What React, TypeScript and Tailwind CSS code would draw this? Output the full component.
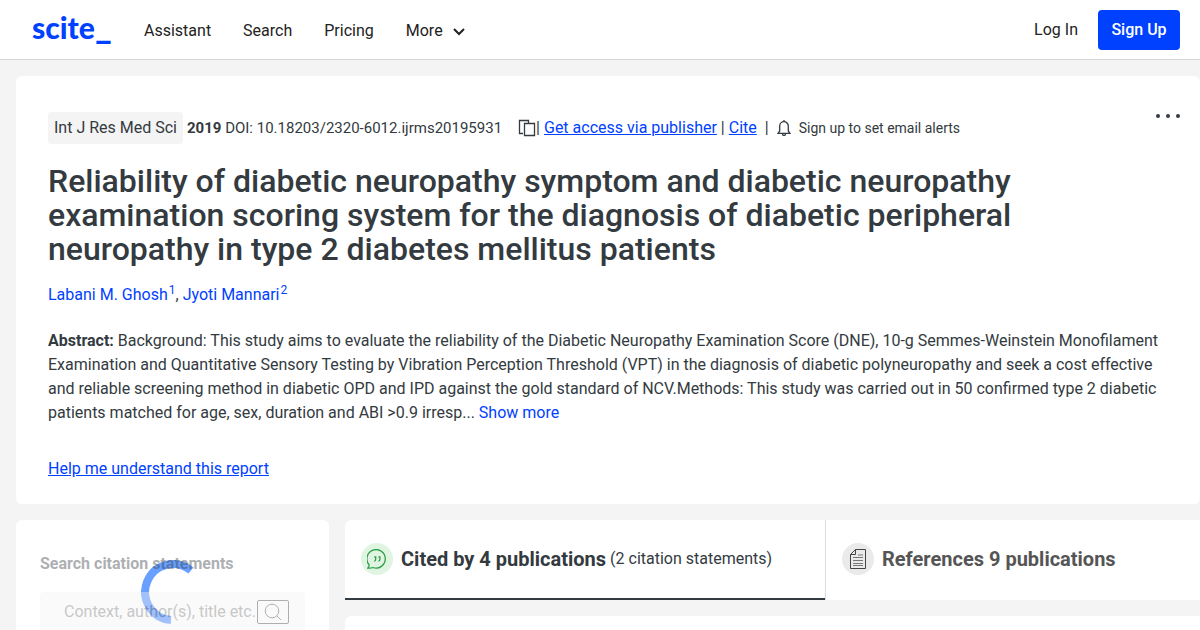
import type { ReactNode } from 'react';

interface NavLinkProps {
  children: ReactNode;
}

function NavLink({ children }: NavLinkProps) {
  return (
    <a href="#" className="text-[#222]">
      {children}
    </a>
  );
}

function Header() {
  return (
    <header className="flex h-[60px] shrink-0 items-center justify-between border-b border-[#d8d8d8] bg-white pl-8 pr-5">
      <div className="flex items-center">
        <a
          href="#"
          className="w-[112px] pb-2 font-['Lato',sans-serif] text-[30px] leading-8 font-black text-[#0041ff]"
        >
          scite<span className="text-4xl leading-8">_</span>
        </a>
        <nav className="flex items-center gap-8 pt-0.5">
          <NavLink>Assistant</NavLink>
          <NavLink>Search</NavLink>
          <NavLink>Pricing</NavLink>
          <button type="button" className="flex items-center gap-2 text-[#222]">
            More
            <svg className="mt-0.5 h-4 w-4" viewBox="0 0 16 16" fill="none" stroke="currentColor" strokeWidth="2">
              <path d="M3 5l5 5 5-5" />
            </svg>
          </button>
        </nav>
      </div>
      <div className="flex items-center gap-5">
        <NavLink>Log In</NavLink>
        <button type="button" className="h-10 w-[82px] rounded bg-[#0041ff] font-medium text-white">
          Sign Up
        </button>
      </div>
    </header>
  );
}

function ReportMeta() {
  return (
    <div className="flex h-8 items-center whitespace-nowrap">
      <span className="mr-1 rounded bg-[#f4f4f4] px-1.5 py-1">Int J Res Med Sci</span>
      <span className="mr-4 text-[15px]">
        <b>2019</b> DOI: 10.18203/2320-6012.ijrms20195931
      </span>
      <button type="button" aria-label="Copy DOI">
        <svg className="h-[18px] w-[18px]" viewBox="0 0 18 18" fill="none" stroke="currentColor" strokeWidth="1.3">
          <path d="M5 14.5H1.5v-13h9V4" />
          <path d="M6.5 4.5h10v12h-10z" />
        </svg>
      </button>
      <span className="mr-1">|</span>
      <a href="#" className="mr-1 text-[#0041ff] underline">
        Get access via publisher
      </a>
      <span className="mr-1">|</span>
      <a href="#" className="mr-2 text-[#0041ff] underline">
        Cite
      </a>
      <span className="mr-2">|</span>
      <button type="button" className="flex items-center gap-2 text-sm">
        <svg className="h-4 w-3.5" viewBox="0 0 14 16" fill="none" stroke="currentColor" strokeWidth="1.3">
          <path d="M7 0v1.5M1 13.4h12L11.3 11V6a4.3 4.3 0 0 0-8.6 0v5L1 13.4z" />
          <path d="M5.5 14a1.5 1.5 0 0 0 3 0" />
        </svg>
        Sign up to set email alerts
      </button>
    </div>
  );
}

function ReportCard() {
  return (
    <section className="h-[428px] shrink-0 rounded-md bg-white py-9 pl-8 pr-5">
      <div className="flex items-start justify-between">
        <ReportMeta />
        <button type="button" aria-label="More options" className="flex h-2 items-center gap-1.5">
          <span className="h-1 w-1 rounded-full bg-[#333a40]" />
          <span className="h-1 w-1 rounded-full bg-[#333a40]" />
          <span className="h-1 w-1 rounded-full bg-[#333a40]" />
        </button>
      </div>
      <h1 className="mt-5 text-[32px] leading-[34px] font-medium">
        Reliability of diabetic neuropathy symptom and diabetic neuropathy
        <br />
        examination scoring system for the diagnosis of diabetic peripheral
        <br />
        neuropathy in type 2 diabetes mellitus patients
      </h1>
      <p className="mt-[17px]">
        <a href="#" className="text-[#0041ff]">
          Labani M. Ghosh<sup className="ml-px text-xs">1</sup>
        </a>
        ,{' '}
        <a href="#" className="text-[#0041ff]">
          Jyoti Mannari<sup className="ml-px text-xs">2</sup>
        </a>
      </p>
      <p className="mt-[22px] whitespace-nowrap">
        <b>Abstract:</b> Background: This study aims to evaluate the reliability of the Diabetic Neuropathy
        Examination Score (DNE), 10-g Semmes-Weinstein Monofilament
        <br />
        Examination and Quantitative Sensory Testing by Vibration Perception Threshold (VPT) in the
        diagnosis of diabetic polyneuropathy and seek a cost effective
        <br />
        and reliable screening method in diabetic OPD and IPD against the gold standard of NCV.Methods:
        This study was carried out in 50 confirmed type 2 diabetic
        <br />
        patients matched for age, sex, duration and ABI &gt;0.9 irresp...{' '}
        <button type="button" className="text-[#0041ff]">
          Show more
        </button>
      </p>
      <a href="#" className="mt-8 inline-block text-[#0041ff] underline">
        Help me understand this report
      </a>
    </section>
  );
}

function SearchPanel() {
  return (
    <aside className="relative w-[313px] shrink-0 rounded-t-md bg-white px-6 pt-8">
      <svg
        className="absolute top-10 left-[125px] h-16 w-16"
        viewBox="0 0 64 64"
        fill="none"
        stroke="#69a0ff"
        strokeWidth="8"
      >
        <path d="M50 10.5A28 28 0 1 0 30 60" />
      </svg>
      <div className="relative opacity-40">
        <label htmlFor="citation-search" className="block font-bold">
          Search citation statements
        </label>
        <div className="mt-4 flex h-10 items-center rounded-t bg-[#f4f4f4] pl-6 pr-4">
          <input
            id="citation-search"
            type="text"
            placeholder="Context, author(s), title etc."
            className="w-full min-w-0 outline-none placeholder:text-[#757575]"
          />
          <button
            type="button"
            aria-label="Search"
            className="flex h-6 w-8 shrink-0 items-center justify-center rounded-xs border border-[#333a40]"
          >
            <svg className="h-[18px] w-[18px]" viewBox="0 0 18 18" fill="none" stroke="currentColor">
              <circle cx="8" cy="8" r="6.8" />
              <path d="M13 13l4 4" />
            </svg>
          </button>
        </div>
      </div>
    </aside>
  );
}

function CitationTabs() {
  return (
    <div className="flex h-20 rounded-l-md bg-white" role="tablist">
      <button
        type="button"
        role="tab"
        aria-selected="true"
        className="flex w-[480px] items-center border-b-2 border-[#333a40] pl-4 whitespace-nowrap"
      >
        <span className="mr-2 flex h-8 w-8 items-center justify-center rounded-full bg-[#dff5e1]">
          <svg className="h-5 w-5" viewBox="0 0 20 20" fill="none" stroke="#2d9d46" strokeWidth="1.3">
            <path d="M.8 19.1c1-.5 1.3-1.6 1.3-3.3A9.2 9.2 0 1 1 6 18.5c-1.5.6-3.5.8-5.2.6z" />
            <path d="M7.3 8h1.4v2c0 1.3-.5 2-1.4 2.4M11.5 8h1.4v2c0 1.3-.5 2-1.4 2.4" />
          </svg>
        </span>
        <span className="mr-1 text-xl font-bold">Cited by 4 publications</span>
        <span>(2 citation statements)</span>
      </button>
      <button
        type="button"
        role="tab"
        aria-selected="false"
        className="flex flex-1 items-center border-l border-[#ddd] pb-0.5 pl-4 whitespace-nowrap text-[#555]"
      >
        <span className="mr-2 flex h-8 w-8 items-center justify-center rounded-full bg-[#eaeaea]">
          <svg className="h-5 w-4" viewBox="0 0 16 20" fill="none" stroke="#444">
            <path d="M5.5.5h10v19H.5v-14z" />
            <path d="M5.5.5v5h-5" />
            <path d="M8 6h5M3 8.5h10M3 11.5h10M3 14.5h10M3 16.5h10" stroke="#777" />
          </svg>
        </span>
        <span className="text-xl font-bold">References 9 publications</span>
      </button>
    </div>
  );
}

export default function App() {
  return (
    <div className="flex h-screen flex-col overflow-hidden bg-[#f4f4f4] font-['Roboto',sans-serif] text-base text-[#333a40]">
      <Header />
      <main className="flex flex-1 flex-col gap-4 pt-4 pl-4">
        <ReportCard />
        <div className="flex flex-1 gap-4">
          <SearchPanel />
          <div className="flex min-w-0 flex-1 flex-col gap-4">
            <CitationTabs />
            <div className="flex-1 rounded-tl-md bg-white" />
          </div>
        </div>
      </main>
    </div>
  );
}
